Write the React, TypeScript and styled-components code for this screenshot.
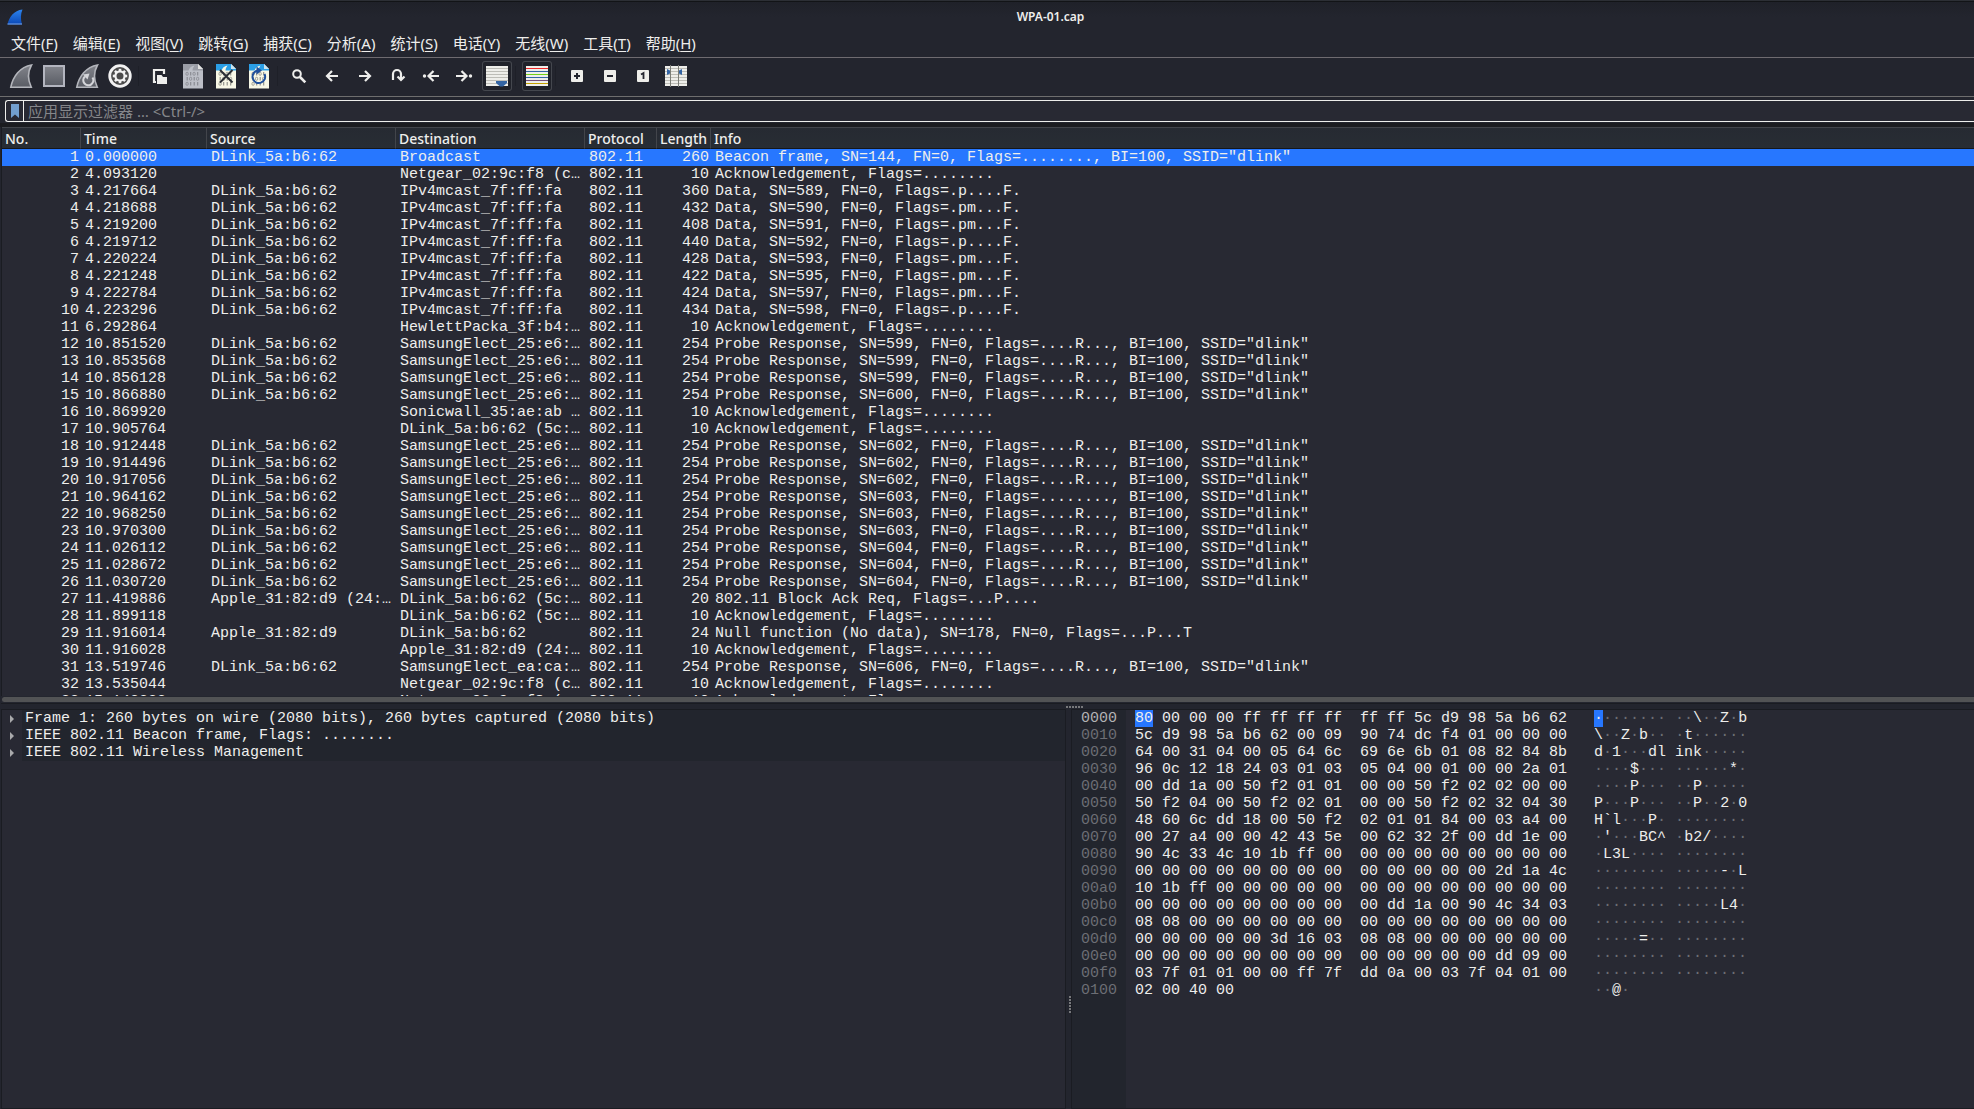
import React from "react";
import styled, { createGlobalStyle, css } from "styled-components";

const UI = `"Noto Sans", "Noto Sans CJK SC", sans-serif`;
const MONO = `"Liberation Mono", monospace`;

const c = {
  window: "#23252e",
  base: "#282933",
  alt: "#22252d",
  line: "#1a1c22",
  text: "#eeeeec",
  dim: "#6c6e74",
  accent: "#2777ff",
};

const Global = createGlobalStyle`
  * { box-sizing: border-box; }
  body { margin: 0; background: ${c.window}; color: ${c.text}; font-family: ${UI}; }
  button, input { font: inherit; color: inherit; border: 0; margin: 0; padding: 0; background: none; }
  svg { display: block; }
`;

const Window = styled.div`
  display: flex;
  flex-direction: column;
  height: 100vh;
  overflow: hidden;
  background: ${c.window};
`;

const TitleBar = styled.header`
  display: flex;
  align-items: center;
  height: 32px;
  padding: 1px 0 0 7px;
  border-top: 1px solid #2c2f35;
  background: linear-gradient(#121417 0 1px, #1f2129 1px, ${c.window} 16px);
`;

const Title = styled.h1`
  flex: 1;
  margin: 0;
  padding-left: 104px;
  text-align: center;
  font-size: 12px;
  line-height: 20px;
  font-weight: 600;
`;

const MenuBar = styled.nav`
  display: flex;
  align-items: flex-start;
  gap: 1px;
  height: 25px;
  padding-left: 4px;
`;

const MenuItem = styled.button`
  padding: 0 7px;
  font-size: 15px;
  line-height: 22px;
  white-space: nowrap;
`;

const Mnemonic = styled.span`
  text-decoration: underline;
  text-decoration-thickness: 1px;
  text-underline-offset: 2px;
`;

const ToolBar = styled.div`
  display: flex;
  align-items: center;
  gap: 3px;
  height: 40px;
  padding: 0 6px 2px;
  border-top: 1px solid #6e6b70;
  border-bottom: 1px solid #6e6e6e;
`;

const ToolButton = styled.button<{ $checked?: boolean }>`
  width: 30px;
  height: 30px;
  border-radius: 3px;
  ${(p) => p.$checked && css`box-shadow: inset 0 0 0 1px #44474e; background: #20222a;`}
`;

const ToolSeparator = styled.span`
  width: 4px;
  height: 20px;
  border-left: 1px solid #1e2028;
`;

const FilterBar = styled.form`
  display: flex;
  height: 30px;
  padding: 3px 0 5px 5px;
  background: linear-gradient(#23252e 26px, #1b1c20 26px);
`;

const FilterFrame = styled.div`
  display: flex;
  flex: 1;
  border: 1px solid ${c.text};
  border-right: 0;
  border-radius: 3px 0 0 3px;
  background: ${c.base};
`;

const BookmarkButton = styled.button`
  display: flex;
  align-items: center;
  justify-content: center;
  width: 18px;
  border-right: 1px solid ${c.text};
`;

const FilterInput = styled.input`
  flex: 1;
  min-width: 0;
  padding: 0 4px;
  font-size: 15px;
  line-height: 20px;
  outline: 0;
  &::placeholder { color: #85868a; opacity: 1; }
`;

const PacketPane = styled.section`
  flex: 0 0 569px;
  margin-left: 1px;
  border-left: 1px solid ${c.line};
  background: ${c.base};
  overflow: hidden;
`;

const PacketTable = styled.table`
  width: 100%;
  table-layout: fixed;
  border-collapse: separate;
  border-spacing: 0;
`;

const HeadCell = styled.th`
  height: 22px;
  padding: 2px 0 0 3px;
  border-top: 1px solid #42454b;
  border-right: 1px solid #42454b;
  border-bottom: 1px solid #15171b;
  background: linear-gradient(#262a32, #282d34);
  font-size: 14px;
  line-height: 18px;
  font-weight: 500;
  text-align: left;
  white-space: nowrap;
  &:last-child { border-right: 0; }
`;

const PacketRow = styled.tr<{ $selected: boolean }>`
  background: ${(p) => (p.$selected ? c.accent : "transparent")};
`;

const Cell = styled.td<{ $right?: boolean }>`
  height: 17px;
  padding: 0 2px 0 4px;
  font-family: ${MONO};
  font-size: 15px;
  line-height: 17px;
  text-align: ${(p) => (p.$right ? "right" : "left")};
  white-space: nowrap;
  overflow: hidden;
`;

const ScrollBar = styled.div`
  flex: 0 0 8px;
  margin-left: 1px;
  padding: 1px 0 1px 1px;
  border-bottom: 1px solid ${c.line};
  background: #24262f;
`;

const ScrollThumb = styled.div`
  height: 100%;
  border-radius: 3px 0 0 3px;
  background: #525355;
`;

const HSplitter = styled.div`
  flex: 0 0 5px;
  padding: 2px 0 0 54%;
`;

const Grip = styled.div<{ $vertical?: boolean }>`
  width: ${(p) => (p.$vertical ? 2 : 17)}px;
  height: ${(p) => (p.$vertical ? 17 : 2)}px;
  background: repeating-linear-gradient(
    ${(p) => (p.$vertical ? "to bottom" : "to right")},
    #77787b 0 2px,
    transparent 2px 3px
  );
`;

const Lower = styled.div`
  display: grid;
  flex: 1;
  min-height: 0;
  grid-template-columns: 54% 5px 1fr;
`;

const TreePane = styled.section`
  margin-left: 1px;
  border: 1px solid ${c.line};
  background: ${c.base};
`;

const TreeList = styled.ul`
  margin: 0;
  padding: 0;
  list-style: none;
`;

const TreeRow = styled.button`
  display: flex;
  width: 100%;
  height: 17px;
  font-family: ${MONO};
  font-size: 15px;
  line-height: 17px;
  white-space: nowrap;
`;

const TreeGutter = styled.span`
  display: flex;
  align-items: center;
  width: 20px;
  height: 17px;
  padding-left: 8px;
`;

const TreeText = styled.span`
  flex: 1;
  padding-left: 3px;
  text-align: left;
  background: ${c.alt};
`;

const VSplitter = styled.div`
  display: flex;
  flex-direction: column;
  align-items: flex-end;
  &::before { content: ""; flex: 287 0 0; }
  &::after { content: ""; flex: 96 0 0; }
`;

const HexPane = styled.section`
  display: flex;
  align-items: flex-start;
  border: 1px solid ${c.line};
  border-right: 0;
  background: linear-gradient(to right, ${c.alt} 54px, ${c.base} 54px);
`;

const HexTable = styled.table`
  border-collapse: collapse;
  font-family: ${MONO};
  font-size: 15px;
  line-height: 17px;
  white-space: pre;
`;

const Offset = styled.th<{ $active: boolean }>`
  width: 54px;
  padding: 0 0 0 9px;
  font-weight: 400;
  text-align: left;
  color: ${(p) => (p.$active ? "#b2b3b3" : c.dim)};
`;

const HexCell = styled.td`
  height: 17px;
  padding: 0 0 0 9px;
`;

const AsciiCell = styled(HexCell)`
  padding-left: 27px;
`;

const Mark = styled.span<{ $kind: string }>`
  ${(p) => p.$kind === "sel" && css`display: inline-block; height: 17px; vertical-align: top; background: ${c.accent};`}
  ${(p) => p.$kind === "dim" && css`color: ${c.dim};`}
`;

const menus: [string, string][] = [
  ["文件", "F"], ["编辑", "E"], ["视图", "V"], ["跳转", "G"], ["捕获", "C"], ["分析", "A"],
  ["统计", "S"], ["电话", "Y"], ["无线", "W"], ["工具", "T"], ["帮助", "H"],
];

const columns: [string, number | undefined][] = [
  ["No.", 79], ["Time", 126], ["Source", 189], ["Destination", 189],
  ["Protocol", 72], ["Length", 54], ["Info", undefined],
];

const DL = "DLink_5a:b6:62";
const MC = "IPv4mcast_7f:ff:fa";
const SE = "SamsungElect_25:e6:…";
const NG = "Netgear_02:9c:f8 (c…";
const DLC = "DLink_5a:b6:62 (5c:…";
const ACK = "Acknowledgement, Flags=........";
const data = (sn: number, flags: string) => `Data, SN=${sn}, FN=0, Flags=${flags}`;
const probe = (sn: number, flags = "....R...") =>
  `Probe Response, SN=${sn}, FN=0, Flags=${flags}, BI=100, SSID="dlink"`;

const packets: [string, string, string, number, string][] = [
  ["0.000000", DL, "Broadcast", 260, 'Beacon frame, SN=144, FN=0, Flags=........, BI=100, SSID="dlink"'],
  ["4.093120", "", NG, 10, ACK],
  ["4.217664", DL, MC, 360, data(589, ".p....F.")],
  ["4.218688", DL, MC, 432, data(590, ".pm...F.")],
  ["4.219200", DL, MC, 408, data(591, ".pm...F.")],
  ["4.219712", DL, MC, 440, data(592, ".p....F.")],
  ["4.220224", DL, MC, 428, data(593, ".pm...F.")],
  ["4.221248", DL, MC, 422, data(595, ".pm...F.")],
  ["4.222784", DL, MC, 424, data(597, ".pm...F.")],
  ["4.223296", DL, MC, 434, data(598, ".p....F.")],
  ["6.292864", "", "HewlettPacka_3f:b4:…", 10, ACK],
  ["10.851520", DL, SE, 254, probe(599)],
  ["10.853568", DL, SE, 254, probe(599)],
  ["10.856128", DL, SE, 254, probe(599)],
  ["10.866880", DL, SE, 254, probe(600)],
  ["10.869920", "", "Sonicwall_35:ae:ab …", 10, ACK],
  ["10.905764", "", DLC, 10, ACK],
  ["10.912448", DL, SE, 254, probe(602)],
  ["10.914496", DL, SE, 254, probe(602)],
  ["10.917056", DL, SE, 254, probe(602)],
  ["10.964162", DL, SE, 254, probe(603, "........")],
  ["10.968250", DL, SE, 254, probe(603)],
  ["10.970300", DL, SE, 254, probe(603)],
  ["11.026112", DL, SE, 254, probe(604)],
  ["11.028672", DL, SE, 254, probe(604)],
  ["11.030720", DL, SE, 254, probe(604)],
  ["11.419886", "Apple_31:82:d9 (24:…", DLC, 20, "802.11 Block Ack Req, Flags=...P...."],
  ["11.899118", "", DLC, 10, ACK],
  ["11.916014", "Apple_31:82:d9", "DLink_5a:b6:62", 24, "Null function (No data), SN=178, FN=0, Flags=...P...T"],
  ["11.916028", "", "Apple_31:82:d9 (24:…", 10, ACK],
  ["13.519746", DL, "SamsungElect_ea:ca:…", 254, probe(606)],
  ["13.535044", "", NG, 10, ACK],
  ["15.142222", "", NG, 10, ACK],
];

const tree = [
  "Frame 1: 260 bytes on wire (2080 bits), 260 bytes captured (2080 bits)",
  "IEEE 802.11 Beacon frame, Flags: ........",
  "IEEE 802.11 Wireless Management",
];

const dump = [
  "80 00 00 00 ff ff ff ff ff ff 5c d9 98 5a b6 62",
  "5c d9 98 5a b6 62 00 09 90 74 dc f4 01 00 00 00",
  "64 00 31 04 00 05 64 6c 69 6e 6b 01 08 82 84 8b",
  "96 0c 12 18 24 03 01 03 05 04 00 01 00 00 2a 01",
  "00 dd 1a 00 50 f2 01 01 00 00 50 f2 02 02 00 00",
  "50 f2 04 00 50 f2 02 01 00 00 50 f2 02 32 04 30",
  "48 60 6c dd 18 00 50 f2 02 01 01 84 00 03 a4 00",
  "00 27 a4 00 00 42 43 5e 00 62 32 2f 00 dd 1e 00",
  "90 4c 33 4c 10 1b ff 00 00 00 00 00 00 00 00 00",
  "00 00 00 00 00 00 00 00 00 00 00 00 00 2d 1a 4c",
  "10 1b ff 00 00 00 00 00 00 00 00 00 00 00 00 00",
  "00 00 00 00 00 00 00 00 00 dd 1a 00 90 4c 34 03",
  "08 08 00 00 00 00 00 00 00 00 00 00 00 00 00 00",
  "00 00 00 00 00 3d 16 03 08 08 00 00 00 00 00 00",
  "00 00 00 00 00 00 00 00 00 00 00 00 00 dd 09 00",
  "03 7f 01 01 00 00 ff 7f dd 0a 00 03 7f 04 01 00",
  "02 00 40 00",
].map((row) => row.split(" "));

const toHex = (row: string[]) =>
  row.slice(0, 8).join(" ") + (row.length > 8 ? "  " + row.slice(8).join(" ") : "");

function asciiRuns(row: string[], first: boolean) {
  const runs: { kind: string; text: string }[] = [];
  row.forEach((hex, i) => {
    const n = parseInt(hex, 16);
    const printable = n > 32 && n < 127;
    const kind = first && i === 0 ? "sel" : printable ? "text" : "dim";
    const ch = (i === 8 ? " " : "") + (printable ? String.fromCharCode(n) : "·");
    const last = runs[runs.length - 1];
    if (last && last.kind === kind) last.text += ch;
    else runs.push({ kind, text: ch });
  });
  return runs;
}

const Icon = ({ children }: { children: React.ReactNode }) => (
  <svg width="30" height="30" viewBox="0 0 30 30" fill="none" aria-hidden="true">{children}</svg>
);

const finPath = "M4.8 26.2C7 15.5 14 6 25.5 4C21.6 11 21.8 19 25.2 26.2Z";

const Fin = () => (
  <>
    <defs>
      <linearGradient id="fin" x1="0" y1="0" x2="0" y2="1">
        <stop offset="0" stopColor="#82848b" />
        <stop offset="1" stopColor="#595c64" />
      </linearGradient>
    </defs>
    <path d={finPath} fill="url(#fin)" stroke="#b3b5bb" strokeWidth="1.6" />
  </>
);

const Doc = ({ page, band, ink }: { page: string; band: string; ink: string }) => (
  <>
    <path d="M5 3H20L25 8V27.500H5Z" fill={page} />
    <path d="M5 3H20L25 8V9.500H14.500C14.500 7.500 15.500 6 16.500 4.500C13 5 11.500 7 10.500 9.500H5Z" fill={band} />
    <path d="M20 3V8H25Z" fill="#f4f4f0" fillOpacity=".8" />
    {[11, 16, 21].map((y, r) =>
      [8, 11.5, 15, 18.5].map((x, i) =>
        (i + r) % 2 && r < 2 ? (
          <path key={x + y * 99} d={`M${x + 1.2} ${y}V${y + 3.6}`} stroke={ink} strokeWidth="1.1" />
        ) : r === 2 && i > 0 ? (
          <path key={x + y * 99} d={`M${x + 1.2} ${y}V${y + 3.6}`} stroke={ink} strokeWidth="1.1" />
        ) : (
          <rect key={x + y * 99} x={x} y={y + 0.3} width="2.2" height="3" rx="1" stroke={ink} strokeWidth=".8" />
        )
      )
    )}
  </>
);

const arrow = { stroke: "#eeeeec", strokeWidth: 2.2 };
const teeth = Array.from({ length: 8 }, (_, i) => i * 45);

const LinedPage = ({ colors }: { colors: string[] }) => (
  <>
    <rect x="4" y="5" width="22" height="20" fill="#eeeeea" />
    {colors.map((k, i) => <rect key={i} x="4" y={7 + i * 3} width="22" height="1" fill={k} />)}
  </>
);

const Square = ({ children }: { children: React.ReactNode }) => (
  <>
    <rect x="9" y="9" width="12" height="12" rx="1" fill="#eeeeea" />
    {children}
  </>
);

type Tool = { name: string; icon: React.ReactNode; checked?: boolean } | null;

const grey = "#bdbdb7";
const tools: Tool[] = [
  { name: "开始捕获", icon: <Fin /> },
  { name: "停止捕获", icon: <rect x="5" y="5" width="20" height="20" fill="url(#fin)" stroke="#b3b5bf" strokeWidth="2" /> },
  {
    name: "重新开始捕获",
    icon: (
      <>
        <Fin />
        <path d="M13 15.500A5 5 0 1 0 20.500 16.500" stroke="#d4d5d9" strokeWidth="2.2" />
        <path d="M11 13.500L17.500 12.500L15.500 18.500Z" fill="#d4d5d9" />
      </>
    ),
  },
  {
    name: "捕获选项",
    icon: (
      <>
        <circle cx="15" cy="15" r="10.300" fill="#4b4b4b" stroke="#f2f2f2" strokeWidth="2.800" />
        <circle cx="15" cy="15" r="4.600" stroke="#f2f2f2" strokeWidth="2.200" />
        {teeth.map((a) => (
          <rect key={a} x="13.700" y="7.800" width="2.600" height="3" fill="#f2f2f2" transform={`rotate(${a} 15 15)`} />
        ))}
      </>
    ),
  },
  null,
  {
    name: "打开",
    icon: (
      <>
        <path d="M11 21H9V9H19V13" stroke="#eeeeec" strokeWidth="2.200" />
        <path d="M12 14H16.500L18 16H22V23H12Z" fill="#eeeeec" />
      </>
    ),
  },
  { name: "保存", icon: <Doc page="#bcbfc7" band="#9a9da6" ink="#85878e" /> },
  {
    name: "关闭",
    icon: (
      <>
        <Doc page="#f8f8e6" band="#2b9fe6" ink="#8b8b84" />
        <path d="M9 9L21.500 21.500M21.500 9L9 21.500" stroke="#2b2f35" strokeWidth="2" />
      </>
    ),
  },
  {
    name: "重新加载",
    icon: (
      <>
        <Doc page="#f8f8e6" band="#2b9fe6" ink="#8b8b84" />
        <path d="M14 9.500A6.300 6.300 0 1 0 20.500 13" stroke="#20509c" strokeWidth="2" />
        <path d="M12.500 5.500L18 9.500L12.500 13.500Z" fill="#20509c" />
      </>
    ),
  },
  null,
  {
    name: "查找",
    icon: (
      <>
        <circle cx="13" cy="13" r="3.800" stroke="#eeeeec" strokeWidth="2" />
        <path d="M16 16L21.300 21.300" stroke="#eeeeec" strokeWidth="2.600" />
      </>
    ),
  },
  { name: "后退", icon: <path d="M21 15H10.500M15 10L10 15L15 20" {...arrow} /> },
  { name: "前进", icon: <path d="M9 15H19.500M15 10L20 15L15 20" {...arrow} /> },
  { name: "转到分组", icon: <path d="M10 19V13A4 4 0 0 1 18 13V19M14.500 15.500L18 19L21.500 15.500" {...arrow} /> },
  {
    name: "首个分组",
    icon: (
      <>
        <circle cx="8.500" cy="15" r="1.700" fill="#eeeeec" />
        <path d="M23 15H13M17.500 10L12.500 15L17.500 20" {...arrow} />
      </>
    ),
  },
  {
    name: "最新分组",
    icon: (
      <>
        <circle cx="21.500" cy="15" r="1.700" fill="#eeeeec" />
        <path d="M7 15H17M12.500 10L17.500 15L12.500 20" {...arrow} />
      </>
    ),
  },
  {
    name: "自动滚动",
    checked: true,
    icon: (
      <>
        <LinedPage colors={[grey, grey, grey, grey, grey, grey]} />
        <path d="M14 20H25V22L21 25.500H18L14 22Z" fill="#3465a4" />
      </>
    ),
  },
  null,
  { name: "着色", checked: true, icon: <LinedPage colors={["#ef2929", "#3465a4", "#73d216", "#3465a4", "#75507b", "#c4a000"]} /> },
  null,
  { name: "放大", icon: <Square><path d="M12 15H18M15 12V18" stroke="#23252e" strokeWidth="2" /></Square> },
  { name: "缩小", icon: <Square><path d="M12 15H18" stroke="#23252e" strokeWidth="2" /></Square> },
  { name: "原始大小", icon: <Square><path d="M13 13.500L15.500 12V18" stroke="#23252e" strokeWidth="1.800" /></Square> },
  {
    name: "调整列宽",
    icon: (
      <>
        <LinedPage colors={[grey, grey, grey, grey, grey, grey]} />
        <path d="M9.500 4V26M17.500 4V26" stroke="#7c7e78" />
        <path d="M6 8L9 9.500V12.500L6 14ZM21 8L18 9.500V12.500L21 14Z" fill="#3465a4" />
      </>
    ),
  },
];

export default function App() {
  return (
    <Window>
      <Global />
      <TitleBar>
        <svg width="16" height="16" viewBox="0 0 16 16" aria-hidden="true">
          <defs>
            <linearGradient id="app" x1="0" y1="0" x2="0" y2="1">
              <stop offset="0" stopColor="#2d84ee" />
              <stop offset="1" stopColor="#0a47b4" />
            </linearGradient>
          </defs>
          <path d="M.5 15.500C2 8 7 1.500 15.500.5C13.500 5 13.500 10 15 15.500Z" fill="url(#app)" />
          <path d="M.5 15H15" stroke="#7fa9e6" />
        </svg>
        <Title>WPA-01.cap</Title>
      </TitleBar>
      <MenuBar>
        {menus.map(([name, key]) => (
          <MenuItem key={key} type="button">
            {name}(<Mnemonic>{key}</Mnemonic>)
          </MenuItem>
        ))}
      </MenuBar>
      <ToolBar role="toolbar">
        {tools.map((t, i) =>
          t ? (
            <ToolButton key={i} type="button" aria-label={t.name} $checked={t.checked}>
              <Icon>{t.icon}</Icon>
            </ToolButton>
          ) : (
            <ToolSeparator key={i} />
          )
        )}
      </ToolBar>
      <FilterBar onSubmit={(e) => e.preventDefault()}>
        <FilterFrame>
          <BookmarkButton type="button" aria-label="书签">
            <svg width="8" height="14" viewBox="0 0 8 14" aria-hidden="true">
              <path d="M0 0H8V14L4 10.500L0 14Z" fill="#729fcf" />
            </svg>
          </BookmarkButton>
          <FilterInput aria-label="显示过滤器" placeholder="应用显示过滤器 … <Ctrl-/>" />
        </FilterFrame>
      </FilterBar>
      <PacketPane>
        <PacketTable>
          <colgroup>
            {columns.map(([name, width]) => <col key={name} width={width} />)}
          </colgroup>
          <thead>
            <tr>{columns.map(([name]) => <HeadCell key={name} scope="col">{name}</HeadCell>)}</tr>
          </thead>
          <tbody>
            {packets.map(([time, source, destination, length, info], i) => (
              <PacketRow key={i} $selected={i === 0}>
                <Cell $right>{i + 1}</Cell>
                <Cell>{time}</Cell>
                <Cell>{source}</Cell>
                <Cell>{destination}</Cell>
                <Cell>802.11</Cell>
                <Cell $right>{length}</Cell>
                <Cell>{info}</Cell>
              </PacketRow>
            ))}
          </tbody>
        </PacketTable>
      </PacketPane>
      <ScrollBar><ScrollThumb /></ScrollBar>
      <HSplitter><Grip /></HSplitter>
      <Lower>
        <TreePane>
          <TreeList>
            {tree.map((line) => (
              <li key={line}>
                <TreeRow type="button">
                  <TreeGutter>
                    <svg width="4" height="8" viewBox="0 0 4 8" aria-hidden="true">
                      <path d="M0 0L4 4L0 8Z" fill="#a9aaac" />
                    </svg>
                  </TreeGutter>
                  <TreeText>{line}</TreeText>
                </TreeRow>
              </li>
            ))}
          </TreeList>
        </TreePane>
        <VSplitter><Grip $vertical /></VSplitter>
        <HexPane>
          <HexTable>
            <tbody>
              {dump.map((row, i) => {
                const hex = toHex(row);
                return (
                  <tr key={i}>
                    <Offset scope="row" $active={i === 0}>{(i * 16).toString(16).padStart(4, "0")}</Offset>
                    <HexCell>
                      {i === 0 ? <><Mark $kind="sel">{hex.slice(0, 2)}</Mark>{hex.slice(2)}</> : hex}
                    </HexCell>
                    <AsciiCell>
                      {asciiRuns(row, i === 0).map((run, j) => <Mark key={j} $kind={run.kind}>{run.text}</Mark>)}
                    </AsciiCell>
                  </tr>
                );
              })}
            </tbody>
          </HexTable>
        </HexPane>
      </Lower>
    </Window>
  );
}
